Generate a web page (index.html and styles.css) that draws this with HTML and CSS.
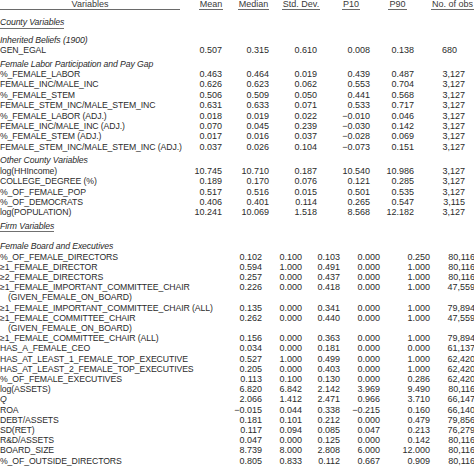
FILE: index.html
```html
<!DOCTYPE html>
<html>
<head>
<meta charset="utf-8">
<link rel="stylesheet" href="styles.css">
</head>
<body>
<div class="table">
  <div class="head">
    <span class="h">Variables</span>
    <span class="h">Mean</span>
    <span class="h">Median</span>
    <span class="h">Std. Dev.</span>
    <span class="h">P10</span>
    <span class="h">P90</span>
    <span class="h">No. of obs</span>
  </div>

  <section class="county">
    <div class="sec-title">County Variables</div>

    <div class="group first">Inherited Beliefs (1900)</div>
    <div class="row"><span class="lbl">GEN_EGAL</span><span>0.507</span><span>0.315</span><span>0.610</span><span>0.008</span><span>0.138</span><span class="short">680</span></div>

    <div class="group">Female Labor Participation and Pay Gap</div>
    <div class="row"><span class="lbl">%_FEMALE_LABOR</span><span>0.463</span><span>0.464</span><span>0.019</span><span>0.439</span><span>0.487</span><span>3,127</span></div>
    <div class="row"><span class="lbl">FEMALE_INC/MALE_INC</span><span>0.626</span><span>0.623</span><span>0.062</span><span>0.553</span><span>0.704</span><span>3,127</span></div>
    <div class="row"><span class="lbl">%_FEMALE_STEM</span><span>0.506</span><span>0.509</span><span>0.050</span><span>0.441</span><span>0.568</span><span>3,127</span></div>
    <div class="row"><span class="lbl">FEMALE_STEM_INC/MALE_STEM_INC</span><span>0.631</span><span>0.633</span><span>0.071</span><span>0.533</span><span>0.717</span><span>3,127</span></div>
    <div class="row"><span class="lbl">%_FEMALE_LABOR (ADJ.)</span><span>0.018</span><span>0.019</span><span>0.022</span><span>&minus;0.010</span><span>0.046</span><span>3,127</span></div>
    <div class="row"><span class="lbl">FEMALE_INC/MALE_INC (ADJ.)</span><span>0.070</span><span>0.045</span><span>0.239</span><span>&minus;0.030</span><span>0.142</span><span>3,127</span></div>
    <div class="row"><span class="lbl">%_FEMALE_STEM (ADJ.)</span><span>0.017</span><span>0.016</span><span>0.037</span><span>&minus;0.028</span><span>0.069</span><span>3,127</span></div>
    <div class="row"><span class="lbl">FEMALE_STEM_INC/MALE_STEM_INC (ADJ.)</span><span>0.037</span><span>0.026</span><span>0.104</span><span>&minus;0.073</span><span>0.151</span><span>3,127</span></div>

    <div class="group">Other County Variables</div>
    <div class="row"><span class="lbl">log(HHIncome)</span><span>10.745</span><span>10.710</span><span>0.187</span><span>10.540</span><span>10.986</span><span>3,127</span></div>
    <div class="row"><span class="lbl">COLLEGE_DEGREE (%)</span><span>0.189</span><span>0.170</span><span>0.076</span><span>0.121</span><span>0.285</span><span>3,127</span></div>
    <div class="row"><span class="lbl">%_OF_FEMALE_POP</span><span>0.517</span><span>0.516</span><span>0.015</span><span>0.501</span><span>0.535</span><span>3,127</span></div>
    <div class="row"><span class="lbl">%_OF_DEMOCRATS</span><span>0.406</span><span>0.401</span><span>0.114</span><span>0.265</span><span>0.547</span><span>3,115</span></div>
    <div class="row"><span class="lbl">log(POPULATION)</span><span>10.241</span><span>10.069</span><span>1.518</span><span>8.568</span><span>12.182</span><span>3,127</span></div>
  </section>

  <section class="firm">
    <div class="sec-title">Firm Variables</div>

    <div class="group first">Female Board and Executives</div>
    <div class="row"><span class="lbl">%_OF_FEMALE_DIRECTORS</span><span>0.102</span><span>0.100</span><span>0.103</span><span>0.000</span><span>0.250</span><span>80,116</span></div>
    <div class="row"><span class="lbl">&ge;1_FEMALE_DIRECTOR</span><span>0.594</span><span>1.000</span><span>0.491</span><span>0.000</span><span>1.000</span><span>80,116</span></div>
    <div class="row"><span class="lbl">&ge;2_FEMALE_DIRECTORS</span><span>0.257</span><span>0.000</span><span>0.437</span><span>0.000</span><span>1.000</span><span>80,116</span></div>
    <div class="row"><span class="lbl">&ge;1_FEMALE_IMPORTANT_COMMITTEE_CHAIR<span class="cont">(GIVEN_FEMALE_ON_BOARD)</span></span><span>0.226</span><span>0.000</span><span>0.418</span><span>0.000</span><span>1.000</span><span>47,559</span></div>
    <div class="row"><span class="lbl">&ge;1_FEMALE_IMPORTANT_COMMITTEE_CHAIR (ALL)</span><span>0.135</span><span>0.000</span><span>0.341</span><span>0.000</span><span>1.000</span><span>79,894</span></div>
    <div class="row"><span class="lbl">&ge;1_FEMALE_COMMITTEE_CHAIR<span class="cont">(GIVEN_FEMALE_ON_BOARD)</span></span><span>0.262</span><span>0.000</span><span>0.440</span><span>0.000</span><span>1.000</span><span>47,559</span></div>
    <div class="row"><span class="lbl">&ge;1_FEMALE_COMMITTEE_CHAIR (ALL)</span><span>0.156</span><span>0.000</span><span>0.363</span><span>0.000</span><span>1.000</span><span>79,894</span></div>
    <div class="row"><span class="lbl">HAS_A_FEMALE_CEO</span><span>0.034</span><span>0.000</span><span>0.181</span><span>0.000</span><span>0.000</span><span>61,137</span></div>
    <div class="row"><span class="lbl">HAS_AT_LEAST_1_FEMALE_TOP_EXECUTIVE</span><span>0.527</span><span>1.000</span><span>0.499</span><span>0.000</span><span>1.000</span><span>62,420</span></div>
    <div class="row"><span class="lbl">HAS_AT_LEAST_2_FEMALE_TOP_EXECUTIVES</span><span>0.205</span><span>0.000</span><span>0.403</span><span>0.000</span><span>1.000</span><span>62,420</span></div>
    <div class="row"><span class="lbl">%_OF_FEMALE_EXECUTIVES</span><span>0.113</span><span>0.100</span><span>0.130</span><span>0.000</span><span>0.286</span><span>62,420</span></div>
    <div class="row"><span class="lbl">log(ASSETS)</span><span>6.820</span><span>6.842</span><span>2.142</span><span>3.969</span><span>9.490</span><span>80,116</span></div>
    <div class="row"><span class="lbl"><i>Q</i></span><span>2.066</span><span>1.412</span><span>2.471</span><span>0.966</span><span>3.710</span><span>66,147</span></div>
    <div class="row"><span class="lbl">ROA</span><span>&minus;0.015</span><span>0.044</span><span>0.338</span><span>&minus;0.215</span><span>0.160</span><span>66,140</span></div>
    <div class="row"><span class="lbl">DEBT/ASSETS</span><span>0.181</span><span>0.101</span><span>0.212</span><span>0.000</span><span>0.479</span><span>79,856</span></div>
    <div class="row"><span class="lbl">SD(RET)</span><span>0.117</span><span>0.094</span><span>0.085</span><span>0.047</span><span>0.213</span><span>76,279</span></div>
    <div class="row"><span class="lbl">R&amp;D/ASSETS</span><span>0.047</span><span>0.000</span><span>0.125</span><span>0.000</span><span>0.142</span><span>80,116</span></div>
    <div class="row"><span class="lbl">BOARD_SIZE</span><span>8.739</span><span>8.000</span><span>2.808</span><span>6.000</span><span>12.000</span><span>80,116</span></div>
    <div class="row"><span class="lbl">%_OF_OUTSIDE_DIRECTORS</span><span>0.805</span><span>0.833</span><span>0.112</span><span>0.667</span><span>0.909</span><span>80,116</span></div>
  </section>
</div>
</body>
</html>
```

FILE: styles.css
```css
html, body {
  margin: 0;
  padding: 0;
  background: #ffffff;
  overflow: hidden;
}

.table {
  width: 480px;
  margin-top: -1px;
  font-family: "Liberation Sans", Arial, sans-serif;
  font-size: 9px;
  line-height: 10.4px;
  color: #2b2b2b;
}

.head {
  display: grid;
  grid-template-columns: 180px 62px 23px 72px 28px 65px 45px;
  justify-items: center;
  color: #3a3a3a;
  white-space: nowrap;
}

.h {
  width: max-content;
  padding: 0 1px;
  border-bottom: 1px solid #6a6a6a;
}

.head .h:first-child {
  width: 180px;
  padding: 0;
  text-align: center;
}

.sec-title {
  width: max-content;
  font-style: italic;
  font-size: 8.7px;
  letter-spacing: -0.1px;
  border-bottom: 1.5px solid #707070;
}

.county .sec-title { margin-top: 7px; }
.firm .sec-title { margin-top: 3px; }

.group {
  font-style: italic;
  font-size: 8.7px;
  letter-spacing: -0.1px;
  margin-top: 3px;
  white-space: nowrap;
}

.county .group.first { margin-top: 6px; }
.firm .group.first { margin-top: 9px; }

.row {
  display: grid;
  text-align: right;
  white-space: nowrap;
}

.county .row {
  grid-template-columns: 182px 40px 47px 48px 53px 44px 51px;
}

.firm .row {
  line-height: 10.2px;
  grid-template-columns: 222px 40px 40px 38px 40px 50px 45px;
}

.row .lbl {
  text-align: left;
  font-size: 8.7px;
  letter-spacing: -0.1px;
}

.cont {
  display: block;
  padding-left: 8px;
}

.row .short {
  padding-right: 8px;
}
```
